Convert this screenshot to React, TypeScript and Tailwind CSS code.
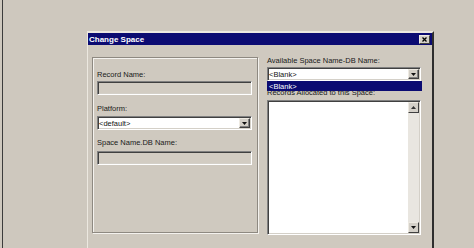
import React from "react";

function DownArrow() {
  return (
    <svg width="5" height="3" viewBox="0 0 5 3">
      <polygon points="0,0 5,0 2.5,3" fill="#111" />
    </svg>
  );
}
function UpArrow() {
  return (
    <svg width="5" height="3" viewBox="0 0 5 3">
      <polygon points="0,3 5,3 2.5,0" fill="#333" />
    </svg>
  );
}

function Combo({ text }: { text: string }) {
  return (
    <div className="flex h-[14px] items-center border border-t-[#808080] border-l-[#808080] border-b-white border-r-white bg-white shadow-[inset_1px_1px_0_#404040,inset_-1px_-1px_0_#d4d0c8]">
      <span className="pl-[1px] text-[7.5px] leading-[9px] text-[#111]">{text}</span>
      <div className="ml-auto mr-[1px] flex h-[10px] w-[11px] items-center justify-center border border-t-[#eeeae2] border-l-[#eeeae2] border-b-[#404040] border-r-[#404040] bg-[#d4d0c8] shadow-[inset_-1px_-1px_0_#808080]">
        <DownArrow />
      </div>
    </div>
  );
}

function Field() {
  return (
    <div className="h-[14px] border border-t-[#808080] border-l-[#808080] border-b-white border-r-white bg-[#d2ccc2] shadow-[inset_1px_1px_0_#404040,inset_-1px_-1px_0_#d4d0c8]" />
  );
}

export default function App() {
  return (
    <div className="h-[248px] w-[474px] overflow-hidden bg-[#cec8be] pl-[2px] font-['Liberation_Sans',Arial,sans-serif]">
      <div className="h-full border-l border-[#3c3c3c] pl-[84px] pt-[31px]">
        <div className="h-[260px] w-[347px] border-l border-t-2 border-r-2 border-l-[#ece8e0] border-t-[#ece8e0] border-r-[#2e2e2e] bg-[#cfc9bf]">
          <div className="flex h-[12px] items-center bg-[#0b0b72]">
            <span className="pl-[1px] pt-[1px] text-[8px] font-bold leading-[11px] text-white">Change Space</span>
            <div className="ml-auto mr-[2px] flex h-[9px] w-[11px] items-center justify-center border border-t-[#eeeae2] border-l-[#eeeae2] border-b-[#404040] border-r-[#404040] bg-[#d4d0c8]">
              <svg width="5" height="5" viewBox="0 0 5 5">
                <path d="M0.5 0.5 L4.5 4.5 M4.5 0.5 L0.5 4.5" stroke="#000" strokeWidth="1.3" />
              </svg>
            </div>
          </div>
          <div className="flex pl-[4px] pt-[11px]">
            <div className="mt-[1px] h-[176px] w-[166px] border border-[#8e8981] pl-[4px] pr-[5px] pt-[12px] shadow-[inset_1px_1px_0_#f4f2ee,1px_1px_0_#f4f2ee]">
              <div className="h-[9px] text-[7.5px] leading-[9px] text-[#1a1a1a]">Record Name:</div>
              <div className="mt-[2px]">
                <Field />
              </div>
              <div className="mt-[9px] h-[9px] text-[7.5px] leading-[9px] text-[#1a1a1a]">Platform:</div>
              <div className="mt-[3px]">
                <Combo text="<default>" />
              </div>
              <div className="mt-[8px] h-[9px] text-[7.5px] leading-[9px] text-[#1a1a1a]">Space Name.DB Name:</div>
              <div className="mt-[4px]">
                <Field />
              </div>
            </div>
            <div className="ml-[9px] w-[154px]">
              <div className="h-[9px] text-[7.5px] leading-[9px] text-[#1a1a1a]">Available Space Name-DB Name:</div>
              <div className="relative mt-[2px]">
                <Combo text="<Blank>" />
                <div className="absolute left-0 top-full z-10 flex h-[10px] w-[155px] items-center bg-[#0b0b72] pl-[2px]">
                  <span className="text-[7.5px] leading-[9px] text-white">&lt;Blank&gt;</span>
                </div>
              </div>
              <div className="mt-[7px] h-[9px] text-[7.5px] leading-[9px] text-[#1a1a1a]">Records Allocated to this Space:</div>
              <div className="mt-[3px] flex h-[135px] border border-t-[#808080] border-l-[#808080] border-b-white border-r-white bg-white shadow-[inset_1px_1px_0_#404040,inset_-1px_-1px_0_#d4d0c8]">
                <div className="flex-1" />
                <div className="flex w-[12px] flex-col py-[1px] pr-[1px]">
                  <div className="flex h-[11px] items-center justify-center border border-t-[#eeeae2] border-l-[#eeeae2] border-b-[#404040] border-r-[#404040] bg-[#d4d0c8]">
                    <UpArrow />
                  </div>
                  <div className="flex-1 bg-[#e9e6e0]" />
                  <div className="flex h-[11px] items-center justify-center border border-t-[#eeeae2] border-l-[#eeeae2] border-b-[#404040] border-r-[#404040] bg-[#d4d0c8]">
                    <DownArrow />
                  </div>
                </div>
              </div>
            </div>
          </div>
        </div>
      </div>
    </div>
  );
}
